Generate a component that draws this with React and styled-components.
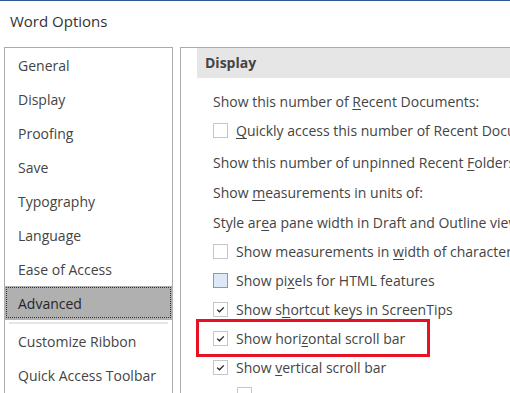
import React from 'react';
import styled, { createGlobalStyle } from 'styled-components';

const GlobalStyle = createGlobalStyle`
  html, body {
    margin: 0;
    padding: 0;
    background: #fff;
  }
  body {
    font-family: 'Open Sans', 'Noto Sans', sans-serif;
    color: #444;
  }
`;

const Window = styled.div`
  display: flex;
  flex-direction: column;
  width: 510px;
  height: 393px;
  overflow: hidden;
  border-top: 1px solid #2b579a;
  box-sizing: border-box;
`;

const Title = styled.div`
  height: 46px;
  padding-left: 10px;
  font-size: 15px;
  line-height: 40px;
  color: #333;
`;

const Body = styled.div`
  display: flex;
  flex: 1;
  padding-left: 4px;
  min-height: 0;
`;

const Nav = styled.nav`
  display: flex;
  flex-direction: column;
  width: 169px;
  flex-shrink: 0;
  border: 1px solid #ababab;
  border-bottom: none;
  box-sizing: border-box;
`;

const NavItem = styled.div`
  position: relative;
  height: 34px;
  display: flex;
  align-items: center;
  font-size: 14px;
  color: ${p => (p.$active ? '#262626' : '#444')};
  background: ${p => (p.$active ? '#b0b0b0' : 'transparent')};
  margin: ${p => (p.$active ? '0 -1px' : '0')};
  padding-left: ${p => (p.$active ? '14px' : '13px')};
  ${p =>
    p.$active &&
    `
    &::after {
      content: '';
      position: absolute;
      inset: 1px 2px 2px 2px;
      border: 1px dotted #333;
    }
  `}
`;

const NavSeparator = styled.div`
  height: 2px;
  margin: 2px 4px 0;
  background: #e6e6e6;
`;

const Content = styled.section`
  flex: 1;
  margin-left: 7px;
  border-left: 1px solid #ababab;
  border-top: 1px solid #ababab;
  overflow: hidden;
`;

const SectionHeader = styled.div`
  margin-left: 16px;
  height: 30px;
  padding-left: 8px;
  display: flex;
  align-items: center;
  padding-bottom: 2px;
  box-sizing: border-box;
  background: #e6e6e6;
  font-size: 14px;
  font-weight: 700;
  color: #444;
`;

const Rows = styled.div`
  display: flex;
  flex-direction: column;
  padding: 8px 0 0 32px;
`;

const Row = styled.div`
  position: relative;
  display: flex;
  align-items: center;
  gap: 8px;
  flex-shrink: 0;
  height: ${p => (p.$check ? '29px' : '30px')};
  margin-top: ${p => p.$gap || 0}px;
  padding-left: ${p => (p.$indent ? '24px' : '0')};
  font-size: 14px;
  white-space: nowrap;
  ${p =>
    p.$marked &&
    `
    &::after {
      content: '';
      position: absolute;
      left: -17px;
      top: -5px;
      width: 234px;
      height: 38px;
      border: 3px solid #e81123;
      box-sizing: border-box;
    }
  `}
`;

const Box = styled.span`
  display: inline-flex;
  align-items: center;
  justify-content: center;
  width: 15px;
  height: 15px;
  flex-shrink: 0;
  box-sizing: border-box;
  border: 1px solid ${p => (p.$tint ? '#7f9dc4' : '#c6c6c6')};
  background: ${p => (p.$tint ? '#dde8f8' : '#fff')};
`;

const Key = styled.u`
  text-decoration: underline;
  text-underline-offset: 2px;
  text-decoration-thickness: 1px;
`;

const Check = () => (
  <svg width="9" height="7" viewBox="0 0 9 7">
    <path d="M1.2 3.6 L3.5 5.8 L7.8 1.4" fill="none" stroke="#222" strokeWidth="1.3" />
  </svg>
);

const CheckRow = ({ checked, tint, children, ...rest }) => (
  <Row $check {...rest}>
    <Box $tint={tint}>{checked ? <Check /> : null}</Box>
    {children ? <span>{children}</span> : null}
  </Row>
);

const navItems = [
  'General',
  'Display',
  'Proofing',
  'Save',
  'Typography',
  'Language',
  'Ease of Access',
  'Advanced',
];

const App = () => (
  <>
    <GlobalStyle />
    <Window>
      <Title>Word Options</Title>
      <Body>
        <Nav>
          {navItems.map(name => (
            <NavItem key={name} $active={name === 'Advanced'}>
              {name}
            </NavItem>
          ))}
          <NavSeparator />
          <NavItem>Customize Ribbon</NavItem>
          <NavItem>Quick Access Toolbar</NavItem>
        </Nav>
        <Content>
          <SectionHeader>Display</SectionHeader>
          <Rows>
            <Row>
              <span>
                Show this number of <Key>R</Key>ecent Documents:
              </span>
            </Row>
            <CheckRow>
              <Key>Q</Key>uickly access this number of Recent Documents:
            </CheckRow>
            <Row $gap={2}>
              <span>
                Show this number of unpinned Recent <Key>F</Key>olders:
              </span>
            </Row>
            <Row>
              <span>
                Show <Key>m</Key>easurements in units of:
              </span>
            </Row>
            <Row>
              <span>
                Style ar<Key>e</Key>a pane width in Draft and Outline views:
              </span>
            </Row>
            <CheckRow>
              Show measurements in <Key>w</Key>idth of characters
            </CheckRow>
            <CheckRow tint>
              Show pi<Key>x</Key>els for HTML features
            </CheckRow>
            <CheckRow checked>
              Show s<Key>h</Key>ortcut keys in ScreenTips
            </CheckRow>
            <CheckRow checked $marked>
              Show hori<Key>z</Key>ontal scroll bar
            </CheckRow>
            <CheckRow checked>
              Show <Key>v</Key>ertical scroll bar
            </CheckRow>
            <CheckRow $indent $gap={-2} />
          </Rows>
        </Content>
      </Body>
    </Window>
  </>
);

export default App;
